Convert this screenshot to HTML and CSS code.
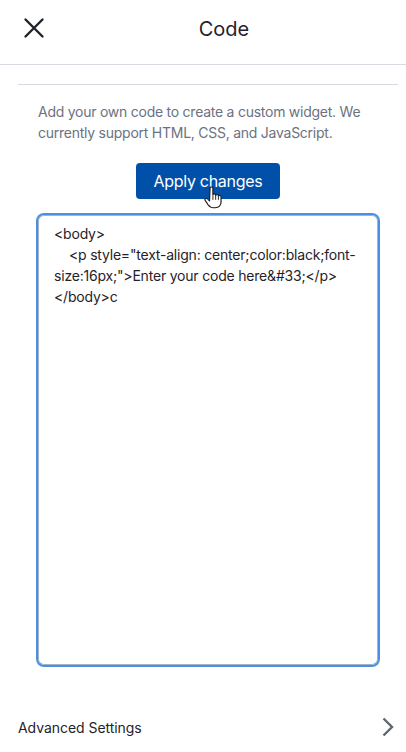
FILE: index.html
```html
<!DOCTYPE html>
<html lang="en">
<head>
    <title>Code</title>
    <link rel="stylesheet" href="styles.css">
</head>
<body>
    <div class="panel">
        <div class="p_head">
            <a href="#none" class="p_close">
                <svg width="22" height="22" viewBox="0 0 22 22"><path d="M2.500 2.500 19.500 19.500M19.500 2.500 2.500 19.500" fill="none" stroke="#1f2329" stroke-width="2.400" stroke-linecap="round"/></svg>
            </a>
            <h2>Code</h2>
        </div>
        <div class="p_body">
            <div class="p_desc">Add your own code to create a custom widget. We currently support HTML, CSS, and JavaScript.</div>
            <div class="p_btn">
                <a href="#none" class="p_apply">Apply changes</a>
                <svg class="p_cursor" width="22" height="24" viewBox="0 0 20 26" preserveAspectRatio="none"><path d="M5.500 2.200c0-1.600 2.600-1.600 2.600 0v7.300c0-1.300 2.500-1.300 2.500 0v.8c0-1.300 2.500-1.300 2.500 0v.9c0-1.200 2.400-1.200 2.400 .2v6c0 3.500-2 6.100-5.300 6.100h-1.500c-2.500 0-3.800-1.200-5-3.200l-2.700-4.900c-.8-1.500 1.200-2.600 2.300-1.300l1.700 2.100z" fill="#fff" stroke="#1c1c1c" stroke-width="1.100" stroke-linejoin="round"/><path d="M8.100 10v5M10.600 10.500v4.500M13.100 11.200v3.800" stroke="#1c1c1c" stroke-width=".9" fill="none"/></svg>
            </div>
            <textarea class="p_code" spellcheck="false">&lt;body&gt;
    &lt;p style="text-align: center;color:black;font-size:16px;"&gt;Enter your code here&amp;#33;&lt;/p&gt;
&lt;/body&gt;c</textarea>
        </div>
        <a href="#none" class="p_adv">
            <span>Advanced Settings</span>
            <svg width="14" height="22" viewBox="0 0 14 22"><path d="M2.500 2.500 11 11 2.500 19.500" fill="none" stroke="#5f6670" stroke-width="2.400"/></svg>
        </a>
    </div>
</body>
</html>
```

FILE: styles.css
```css
body {padding: 0px; margin: 0px; font-family: "Inter", "Roboto", "Liberation Sans", sans-serif; background-color: #fff;}
a {text-decoration: none; color: inherit;}
.panel {
    width: 406px;
    height: 752px;
    overflow: hidden;
    display: flex;
    flex-direction: column;
}
.p_head {
    display: flex;
    align-items: center;
    justify-content: center;
    position: relative;
    height: 64px;
    padding-left: 42px;
    border-bottom: 1px solid #d8dbe2;
}
.p_head h2 {
    margin: 0px 0px 6px;
    font-size: 20px;
    font-weight: 400;
    color: #1f2329;
}
.p_close {
    position: absolute;
    left: 23px;
    top: 17px;
    height: 22px;
}
.p_body {
    margin: 19px 8px 0px 18px;
    border-top: 1px solid #d8dbe2;
    padding: 16px 0px 0px 19px;
    flex: 1;
    display: flex;
    flex-direction: column;
}
.p_desc {
    font-size: 14px;
    line-height: 21px;
    letter-spacing: -0.25px;
    color: #6b7280;
    width: 340px;
    padding-left: 1px;
}
.p_btn {
    display: flex;
    justify-content: center;
    position: relative;
    width: 342px;
    margin-top: 20px;
}
.p_apply {
    display: flex;
    align-items: center;
    justify-content: center;
    width: 144px;
    height: 36px;
    background-color: #0050aa;
    border-radius: 4px;
    color: #fff;
    font-size: 16px;
    letter-spacing: -0.3px;
}
.p_cursor {
    position: absolute;
    left: 167px;
    top: 23px;
}
.p_code {
    display: block;
    width: 344px;
    height: 454px;
    margin: 14px 0px 0px -1px;
    box-sizing: border-box;
    border: 2px solid #4a90e2;
    border-radius: 8px;
    box-shadow: inset 0 0 0 1px #a3b1c4;
    padding: 8px 16px;
    font-family: inherit;
    font-size: 14px;
    line-height: 21px;
    letter-spacing: -0.2px;
    color: #1f2329;
    resize: none;
    outline: none;
}
.p_adv {
    display: flex;
    align-items: center;
    justify-content: space-between;
    padding: 0px 11px 0px 18px;
    height: 40px;
    margin-bottom: 5px;
    font-size: 14px;
    letter-spacing: -0.05px;
    color: #1f2329;
}
```
